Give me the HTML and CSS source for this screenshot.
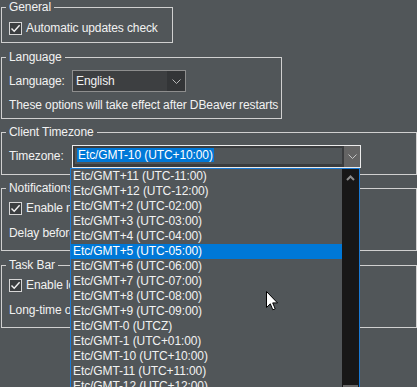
FILE: index.html
```html
<!DOCTYPE html>
<html lang="en">
<head>
    <meta charset="UTF-8">
    <title>Preferences - User Interface</title>
    <link rel="stylesheet" href="styles.css">
</head>
<body>
    <fieldset class="group general">
        <legend>General</legend>
        <div class="check-row">
            <span class="checkbox"><svg width="11" height="11" viewBox="0 0 11 11"><path d="M1.5 5.5 L4.2 8.3 L9.6 2.2" fill="none" stroke="#f2f2f2" stroke-width="1.4"/></svg></span>
            <span>Automatic updates check</span>
        </div>
    </fieldset>

    <fieldset class="group language">
        <legend>Language</legend>
        <div class="field-row">
            <span class="field-label">Language:</span>
            <div class="combo combo-lang">
                <span class="combo-value">English</span>
                <span class="combo-button"><svg width="9" height="5" viewBox="0 0 9 5"><path d="M0.5 0.5 L4.5 4.5 L8.5 0.5" fill="none" stroke="#b9b9b9" stroke-width="1"/></svg></span>
            </div>
        </div>
        <p class="hint">These options will take effect after DBeaver restarts</p>
    </fieldset>

    <fieldset class="group wide">
        <legend>Client Timezone</legend>
        <div class="field-row">
            <span class="field-label">Timezone:</span>
            <div class="combo combo-tz">
                <span class="combo-value"><span class="selection">Etc/GMT-10 (UTC+10:00)</span></span>
                <span class="combo-button"><svg width="9" height="5" viewBox="0 0 9 5"><path d="M0.5 0.5 L4.5 4.5 L8.5 0.5" fill="none" stroke="#c4c4c4" stroke-width="1"/></svg></span>
            </div>
        </div>
    </fieldset>

    <fieldset class="group wide notify">
        <legend>Notifications</legend>
        <div class="check-row">
            <span class="checkbox"><svg width="11" height="11" viewBox="0 0 11 11"><path d="M1.5 5.5 L4.2 8.3 L9.6 2.2" fill="none" stroke="#f2f2f2" stroke-width="1.4"/></svg></span>
            <span>Enable notifications</span>
        </div>
        <div class="text-row">Delay before notification hides (ms):</div>
    </fieldset>

    <fieldset class="group wide taskbar">
        <legend>Task Bar</legend>
        <div class="check-row">
            <span class="checkbox"><svg width="11" height="11" viewBox="0 0 11 11"><path d="M1.5 5.5 L4.2 8.3 L9.6 2.2" fill="none" stroke="#f2f2f2" stroke-width="1.4"/></svg></span>
            <span>Enable long-time operations notification</span>
        </div>
        <div class="text-row">Long-time operation threshold (ms):</div>
    </fieldset>

    <div class="dropdown">
        <ul class="options">
            <li>Etc/GMT+11 (UTC-11:00)</li>
            <li>Etc/GMT+12 (UTC-12:00)</li>
            <li>Etc/GMT+2 (UTC-02:00)</li>
            <li>Etc/GMT+3 (UTC-03:00)</li>
            <li>Etc/GMT+4 (UTC-04:00)</li>
            <li class="active">Etc/GMT+5 (UTC-05:00)</li>
            <li>Etc/GMT+6 (UTC-06:00)</li>
            <li>Etc/GMT+7 (UTC-07:00)</li>
            <li>Etc/GMT+8 (UTC-08:00)</li>
            <li>Etc/GMT+9 (UTC-09:00)</li>
            <li>Etc/GMT-0 (UTCZ)</li>
            <li>Etc/GMT-1 (UTC+01:00)</li>
            <li>Etc/GMT-10 (UTC+10:00)</li>
            <li>Etc/GMT-11 (UTC+11:00)</li>
            <li>Etc/GMT-12 (UTC+12:00)</li>
        </ul>
        <div class="scrollbar">
            <span class="scroll-up"><svg width="9" height="6" viewBox="0 0 9 6"><path d="M1 5 L4.5 1.5 L8 5" fill="none" stroke="#8c8c8c" stroke-width="2"/></svg></span>
            <span class="scroll-thumb"></span>
        </div>
    </div>

    <svg class="cursor" width="13" height="21" viewBox="0 0 13 21">
        <path d="M0.5 0.5 L0.5 16.5 L4.3 12.8 L6.8 18.8 L9.2 17.8 L6.7 11.9 L11.5 11.9 Z" fill="#ffffff" stroke="#000000" stroke-width="1"/>
    </svg>
</body>
</html>
```

FILE: styles.css
```css
body {
    margin: 0;
    padding: 0 0 0 1px;
    background: #515659;
    color: #f2f2f2;
    font-family: 'Liberation Sans', Arial, sans-serif;
    font-size: 12px;
    line-height: 15px;
    letter-spacing: -0.1px;
    height: 387px;
    overflow: hidden;
    position: relative;
}
.group {
    margin: 0;
    min-width: 0;
    border: 1px solid #d0d0d0;
    padding: 6px 7px 6px;
    box-sizing: border-box;
}
.group legend {
    padding: 0 3px;
    margin-left: -3px;
    line-height: 15px;
}
.general {
    width: 172px;
}
.language {
    width: 281px;
    margin-top: 7px;
    padding-top: 5px;
    padding-bottom: 5px;
}
.wide {
    width: 416px;
    margin-top: 6px;
    padding-top: 5px;
}
.notify {
    padding-bottom: 6px;
}
.taskbar {
    margin-top: 7px;
}
.check-row {
    display: flex;
    align-items: center;
    gap: 4px;
    height: 15px;
    white-space: nowrap;
}
.checkbox {
    width: 11px;
    height: 11px;
    border: 1px solid #d6d6d6;
    background: #3b3e40;
    display: flex;
}
.text-row {
    margin-top: 6px;
    height: 22px;
    line-height: 22px;
    white-space: nowrap;
}
.field-row {
    display: flex;
    align-items: center;
}
.field-label {
    width: 63px;
}
.combo {
    display: flex;
    box-sizing: border-box;
}
.combo-lang {
    width: 114px;
    height: 22px;
    border: 1px solid #8e8e8e;
    background: #3d3f41;
}
.combo-lang .combo-value {
    flex: 1;
    padding-left: 3px;
    line-height: 20px;
}
.combo-lang .combo-button {
    width: 18px;
    background: #333537;
    display: flex;
    align-items: center;
    justify-content: center;
}
.combo-tz {
    width: 289px;
    height: 23px;
    border: 1px solid #ececec;
}
.combo-tz .combo-value {
    flex: 1;
    border: 2px solid #3a3c3e;
    border-bottom-width: 3px;
    padding-left: 2px;
    line-height: 15px;
    background: #515659;
}
.selection {
    background: #0078d7;
    color: #ffffff;
    padding: 0 1px;
}
.combo-tz .combo-button {
    width: 16px;
    background: #646464;
    display: flex;
    align-items: center;
    justify-content: center;
}
.hint {
    margin: 6px 0 0;
    white-space: nowrap;
}

/* open combo list */
.dropdown {
    position: absolute;
    left: 70px;
    top: 168px;
    width: 290px;
    height: 240px;
    border: 1px solid #1a7ad4;
    box-sizing: border-box;
    background: #515659;
    display: flex;
}
.options {
    list-style: none;
    margin: 0;
    padding: 0;
    flex: 1;
}
.options li {
    height: 15px;
    padding-left: 2px;
    white-space: nowrap;
}
.options li.active {
    background: #0078d7;
    color: #ffffff;
}
.scrollbar {
    width: 17px;
    background: #171717;
    display: flex;
    flex-direction: column;
    align-items: center;
}
.scroll-up {
    display: flex;
    margin-top: 6px;
}
.scroll-thumb {
    margin-top: 204px;
    width: 15px;
    height: 40px;
    background: #686868;
}
.cursor {
    position: absolute;
    left: 266px;
    top: 291px;
}
```
